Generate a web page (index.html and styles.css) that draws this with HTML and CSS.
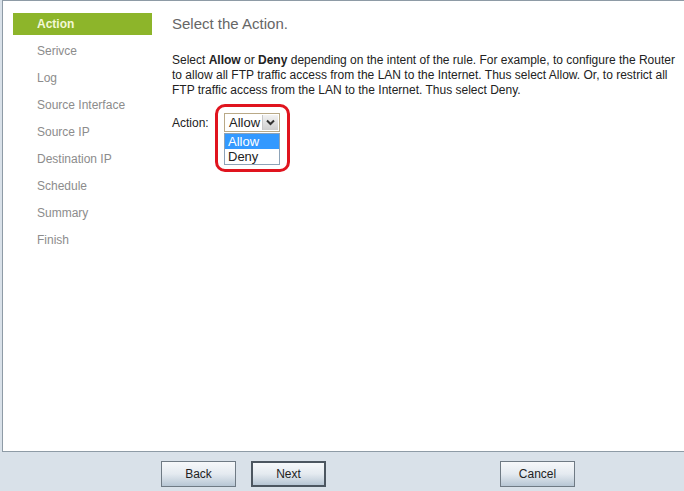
FILE: index.html
```html
<!DOCTYPE html>
<html lang="en">
<head>
<meta charset="UTF-8">
<meta name="viewport" content="width=device-width, initial-scale=1.0">
<link rel="stylesheet" href="styles.css">
<title>Access Rule Wizard</title>
</head>
<body>
  <div class="panel">
    <ul class="steps">
      <li class="active">Action</li>
      <li>Serivce</li>
      <li>Log</li>
      <li>Source Interface</li>
      <li>Source IP</li>
      <li>Destination IP</li>
      <li>Schedule</li>
      <li>Summary</li>
      <li>Finish</li>
    </ul>
    <div class="content">
      <h1 class="title">Select the Action.</h1>
      <p class="intro">Select <b>Allow</b> or <b>Deny</b> depending on the intent of the rule. For example, to configure the Router to allow all FTP traffic access from the LAN to the Internet. Thus select Allow. Or, to restrict all FTP traffic access from the LAN to the Internet. Thus select Deny.</p>
      <div class="field">
        <label class="field-label">Action:</label>
        <div class="combo">
          <div class="combo-box">
            <span class="combo-value">Allow</span>
            <span class="combo-arrow">
              <svg width="9" height="7" viewBox="0 0 9 7"><path d="M1 1.5 L4.5 5 L8 1.5" fill="none" stroke="#333" stroke-width="2"/></svg>
            </span>
          </div>
          <ul class="combo-list">
            <li class="picked">Allow</li>
            <li>Deny</li>
          </ul>
          <div class="callout"></div>
        </div>
      </div>
    </div>
  </div>
  <div class="footer">
    <button class="btn">Back</button>
    <button class="btn btn-default">Next</button>
    <button class="btn btn-cancel">Cancel</button>
  </div>
</body>
</html>
```

FILE: styles.css
```css
body {
  margin: 0;
  background-color: #d9e1e9;
  font-family: "Liberation Sans", Arial, sans-serif;
  font-size: 12px;
  color: #222;
  overflow: hidden;
}

.panel {
  display: flex;
  height: 450px;
  margin-left: 2px;
  background-color: #fff;
  border: 1px solid #8e9ba6;
  border-right: none;
}

/* wizard steps */
.steps {
  list-style: none;
  margin: 0;
  padding: 12px 0 0 10px;
  width: 139px;
}

.steps li {
  height: 22px;
  line-height: 22px;
  margin-bottom: 5px;
  padding-left: 24px;
  color: #8c8c8c;
}

.steps li.active {
  background-color: #8db52a;
  color: #f3f8d6;
  font-weight: bold;
}

.content {
  padding: 13px 0 0 20px;
  width: 508px;
}

.title {
  margin: 0;
  font-size: 15px;
  font-weight: normal;
  line-height: 20px;
  color: #666;
}

.intro {
  margin: 19px 0 0 0;
  line-height: 15px;
  color: #222;
}

.field {
  display: flex;
  align-items: center;
  margin-top: 15px;
}

.field-label {
  width: 52px;
}

/* open select drawn by hand */
.combo {
  position: relative;
}

.combo-box {
  display: flex;
  width: 54px;
  height: 17px;
  border: 1px solid #b9a987;
  background-color: #fff;
}

.combo-value {
  flex: 1;
  padding-left: 4px;
  font-size: 13px;
  line-height: 17px;
}

.combo-arrow {
  display: flex;
  align-items: center;
  justify-content: center;
  width: 15px;
  margin: 1px;
  background: linear-gradient(#f2f2f2, #cfcfcf);
  border-left: 1px solid #c8c8c8;
}

.combo-list {
  position: absolute;
  left: 0;
  top: 20px;
  width: 54px;
  margin: 0;
  padding: 0;
  list-style: none;
  border: 1px solid #8da3b8;
  background-color: #fff;
}

.combo-list li {
  height: 15px;
  line-height: 15px;
  padding-left: 3px;
  font-size: 13px;
}

.combo-list li.picked {
  background-color: #3399ff;
  color: #fff;
}

.callout {
  position: absolute;
  left: -9px;
  top: -9px;
  width: 69px;
  height: 62px;
  border: 3px solid #e0141e;
  border-radius: 10px;
}

.footer {
  display: flex;
  padding: 9px 0 0 161px;
}

.btn {
  width: 75px;
  height: 26px;
  margin-right: 15px;
  border: 1px solid #6f7a84;
  background: linear-gradient(#f6f8fa, #e4eaf0 50%, #b7c6d4);
  font-family: "Liberation Sans", Arial, sans-serif;
  font-size: 12px;
  color: #222;
}

.btn-default {
  border: 2px solid #4c5660;
}

.btn-cancel {
  margin-left: 159px;
}
```
